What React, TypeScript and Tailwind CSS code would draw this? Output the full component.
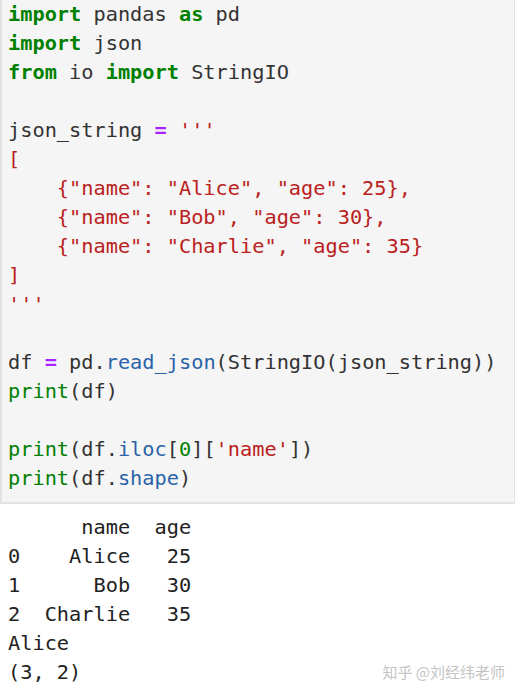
import type { ReactNode } from "react";

const K = ({ children }: { children: ReactNode }) => (
  <span className="font-bold text-[#008000]">{children}</span>
);
const S = ({ children }: { children: ReactNode }) => (
  <span className="text-[#ba2121]">{children}</span>
);
const B = ({ children }: { children: ReactNode }) => (
  <span className="text-[#008000]">{children}</span>
);
const O = ({ children }: { children: ReactNode }) => (
  <span className="font-bold text-[#aa22ff]">{children}</span>
);
const A = ({ children }: { children: ReactNode }) => (
  <span className="text-[#2a63a8]">{children}</span>
);

const output = [
  "      name  age",
  "0    Alice   25",
  "1      Bob   30",
  "2  Charlie   35",
  "Alice",
  "(3, 2)",
];

export default function App() {
  return (
    <div className="relative w-[518px] h-[694px] bg-white font-['DejaVu_Sans_Mono',monospace] text-[20.3px] leading-[29px] text-[#333333]">
      {/* Code cell */}
      <div className="bg-[#f5f5f5] border-l-2 border-b-2 border-r border-[#e3e3e3] mr-[3px] pl-[6px] pb-[8px] h-[504px]">
        <pre className="font-[inherit] whitespace-pre">
          <div><K>import</K> pandas <K>as</K> pd</div>
          <div><K>import</K> json</div>
          <div><K>from</K> io <K>import</K> StringIO</div>
          <div>&nbsp;</div>
          <div>json_string <O>=</O> <S>'''</S></div>
          <div><S>[</S></div>
          <div><S>{'    {"name": "Alice", "age": 25},'}</S></div>
          <div><S>{'    {"name": "Bob", "age": 30},'}</S></div>
          <div><S>{'    {"name": "Charlie", "age": 35}'}</S></div>
          <div><S>]</S></div>
          <div><S>'''</S></div>
          <div>&nbsp;</div>
          <div>df <O>=</O> pd.<A>read_json</A>(StringIO(json_string))</div>
          <div><B>print</B>(df)</div>
          <div>&nbsp;</div>
          <div><B>print</B>(df.<A>iloc</A>[<B>0</B>][<S>'name'</S>])</div>
          <div><B>print</B>(df.<A>shape</A>)</div>
        </pre>
      </div>

      {/* Output */}
      <pre className="font-[inherit] whitespace-pre pl-[8px] pt-[9px] text-[#222222]">
        {output.map((line, i) => (
          <div key={i}>{line}</div>
        ))}
      </pre>

      {/* Watermark */}
      <div className="absolute right-[13px] bottom-[12px] text-[15px] leading-[20px] text-[#c4c4c4] font-['Noto_Sans_CJK_SC',sans-serif]">
        知乎 @刘经纬老师
      </div>
    </div>
  );
}
